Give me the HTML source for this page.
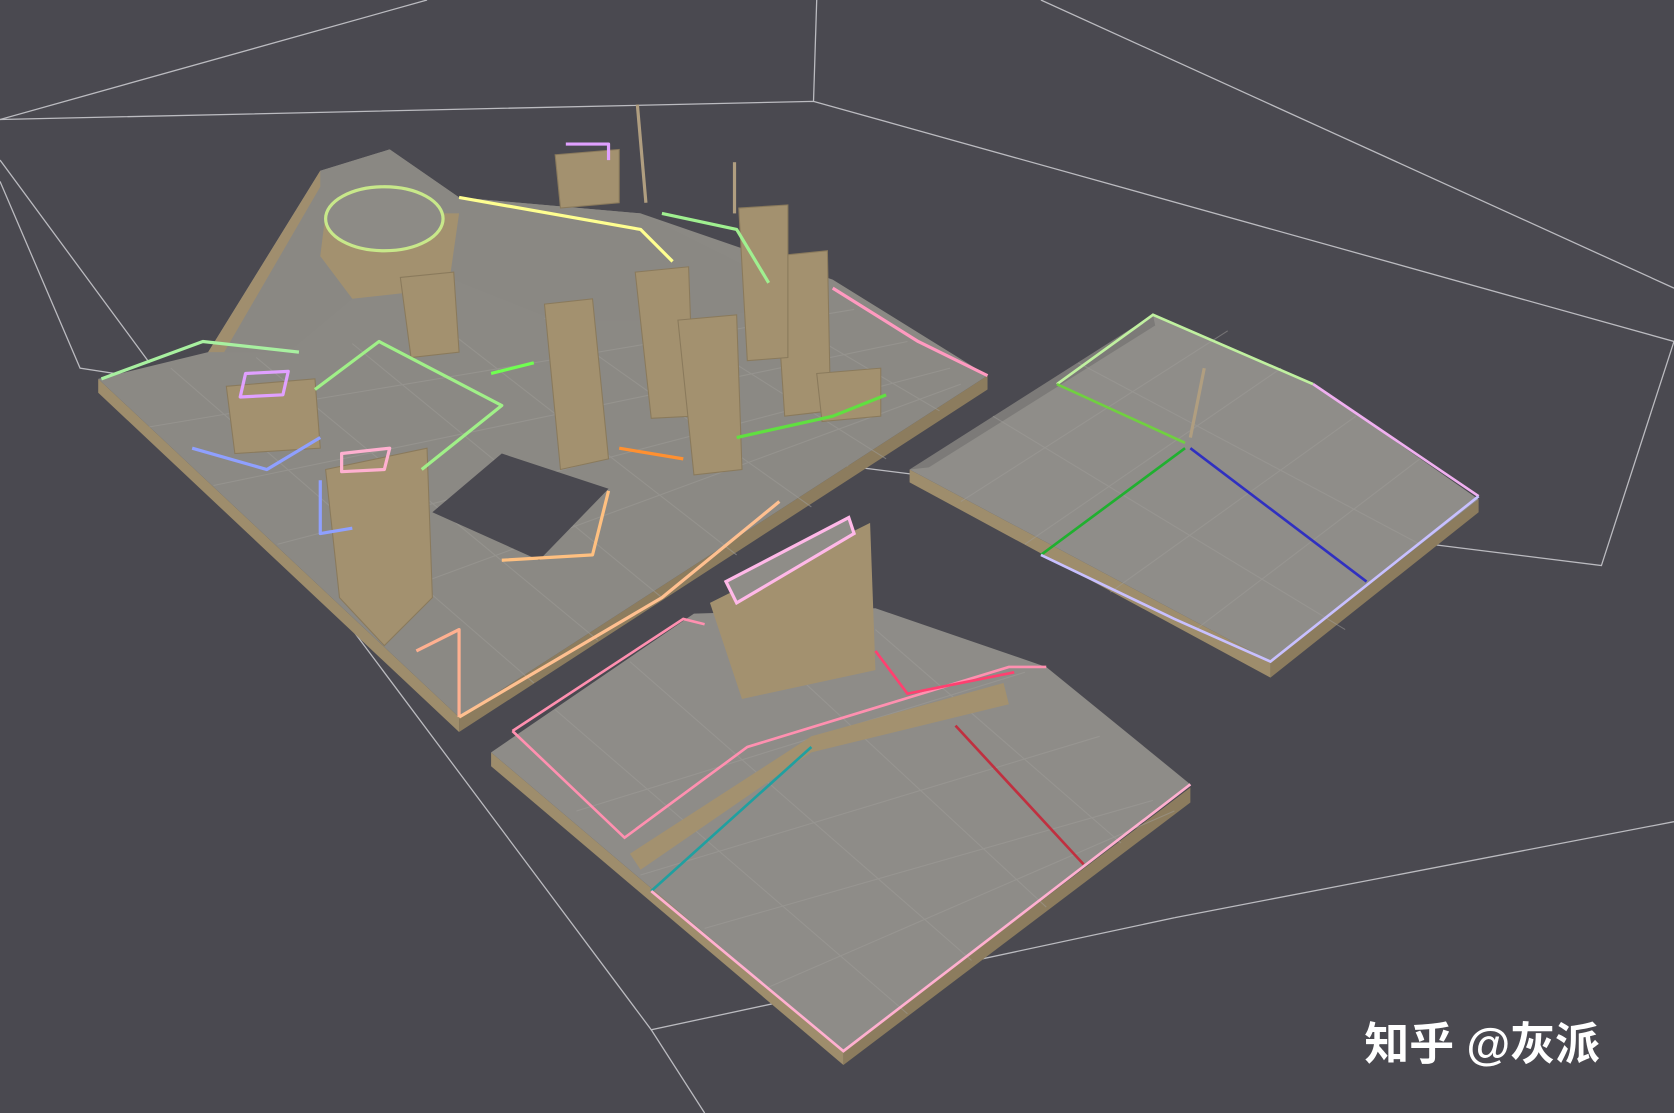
<!DOCTYPE html>
<html><head><meta charset="utf-8">
<style>
html,body{margin:0;padding:0;background:#4a4950;overflow:hidden}
svg{display:block}
.wm{font-family:"Liberation Sans","Noto Sans CJK SC",sans-serif;font-weight:bold;fill:#fff}
</style></head><body>
<svg width="1674" height="1113" viewBox="0 0 1568 1043" preserveAspectRatio="none" xmlns="http://www.w3.org/2000/svg">
<rect width="1568" height="1043" fill="#4a4950"/>
<g stroke="#cfcfd4" stroke-width="1.2" fill="none" opacity="0.85">
<path d="M0 112 L400 0"/>
<path d="M762 95 L765 0"/>
<path d="M0 112 L762 95 L1568 320"/>
<path d="M975 0 L1568 270"/>
<path d="M1568 320 L1500 530 L1340 510"/>
<path d="M0 150 L140 340"/>
<path d="M330 590 L610 965 L1100 860"/>
<path d="M0 170 L75 345 L140 355"/>
<path d="M610 965 L660 1043"/>
<path d="M1100 860 L1568 770"/>
<path d="M780 435 L860 445"/>
</g>
<!-- LEFT PLATE -->
<polygon points="92,355 430,672 430,686 92,368" fill="#9e8d6c"/>
<polygon points="430,672 925,352 925,365 430,686" fill="#8c7c5e"/>
<polygon points="92,355 195,330 300,160 365,140 430,185 600,200 780,262 925,352 430,672" fill="#8b8984"/>
<g stroke="#9c9a95" stroke-width="1" opacity="0.6">
<path d="M160 345 L500 640 M240 335 L560 600 M330 322 L620 560 M420 310 L690 520 M510 298 L760 475 M600 285 L830 430 M690 273 L880 385"/>
<path d="M140 400 L800 290 M200 455 L850 320 M260 510 L890 345 M330 570 L900 360"/>
</g>
<polygon points="405,480 470,425 570,458 505,525" fill="#4a4950"/>
<polygon points="195,330 300,160 365,140 430,185 600,200 700,250 720,290 640,300 520,300 420,260 330,280 270,330" fill="#8a8883"/>
<polygon points="195,330 300,160 300,175 210,330" fill="#a08e6e"/>
<polygon points="305,200 430,200 420,270 330,280 300,240" fill="#a3916f"/>
<ellipse cx="360" cy="205" rx="55" ry="30" fill="#8d8b86" stroke="#c8e88a" stroke-width="3"/>
<g fill="#a3916f" stroke="#8a7a5c" stroke-width="1">
<polygon points="375,260 425,255 430,330 385,335"/>
<polygon points="510,285 555,280 570,430 525,440"/>
<polygon points="595,255 645,250 650,390 610,392"/>
<polygon points="635,300 690,295 695,440 650,445"/>
<polygon points="725,240 775,235 778,385 735,390"/>
<polygon points="692,195 738,192 738,335 700,338"/>
<polygon points="520,145 580,140 580,190 525,195"/>
<polygon points="212,362 295,355 300,420 220,425"/>
<polygon points="305,440 400,420 405,560 360,605 318,560"/>
<polygon points="765,350 825,345 825,390 770,395"/>
</g>
<g fill="none" stroke-width="3" stroke-linejoin="round">
<path d="M95 355 L190 320 L280 330" stroke="#a8f0a0"/>
<path d="M295 365 L355 320 L470 380 L395 440" stroke="#a0f088"/>
<path d="M180 420 L250 440 L300 410" stroke="#8fa0ff"/>
<path d="M300 450 L300 500 L330 495" stroke="#8fa0ff"/>
<path d="M430 672 L430 590 L390 610" stroke="#ffb090"/>
<path d="M430 672 L620 560 L730 470" stroke="#ffc090"/>
<path d="M570 460 L555 520 L470 525" stroke="#ffc080"/>
<path d="M690 410 L780 390 L830 370" stroke="#60e040"/>
<path d="M780 270 L860 320 L925 352" stroke="#ff9ac0"/>
<path d="M430 185 L600 215 L630 245" stroke="#ffff90"/>
<path d="M530 135 L570 135 L570 150" stroke="#e0a0ff"/>
<path d="M230 350 L270 348 L265 370 L225 372 Z" stroke="#e0a0ff"/>
<path d="M320 425 L365 420 L360 440 L320 442 Z" stroke="#ffb0d0"/>
<path d="M620 200 L690 215 L720 265" stroke="#a0f090"/>
<path d="M460 350 L500 340" stroke="#70ff50"/>
<path d="M580 420 L640 430" stroke="#ff9030"/>
</g>
<line x1="597" y1="98" x2="605" y2="190" stroke="#b09e80" stroke-width="3"/>
<line x1="688" y1="152" x2="688" y2="200" stroke="#b09e80" stroke-width="3"/>
<!-- RIGHT PLATE -->
<polygon points="852,440 1190,620 1190,635 852,452" fill="#9e8d6c"/>
<polygon points="1190,620 1385,468 1385,480 1190,635" fill="#8c7c5e"/>
<polygon points="852,440 1080,295 1230,360 1385,468 1190,620" fill="#8f8d89"/>
<polygon points="852,440 1080,295 1082,305 870,438" fill="#5a5958" opacity="0.35"/>
<g stroke="#a09e9a" stroke-width="1" opacity="0.5">
<path d="M930 390 L1260 590 M1010 340 L1330 510 M900 470 L1150 310 M960 510 L1200 345 M1040 555 L1270 390 M1120 590 L1330 430"/>
</g>
<g fill="none" stroke-width="2.5">
<path d="M990 360 L1080 295 L1230 360" stroke="#c0f0a0"/>
<path d="M1230 360 L1385 465" stroke="#f0b0f0"/>
<path d="M990 360 L1110 415" stroke="#70d040"/>
<path d="M975 520 L1110 420" stroke="#20b030"/>
<path d="M1115 420 L1280 545" stroke="#3030c0"/>
<path d="M975 520 L1100 580 L1190 620 L1385 465" stroke="#c8c0ff"/>
</g>
<line x1="1128" y1="345" x2="1115" y2="410" stroke="#b09e80" stroke-width="3"/>
<!-- BOTTOM PLATE -->
<polygon points="460,705 790,985 790,998 460,718" fill="#9e8d6c"/>
<polygon points="790,985 1115,738 1115,752 790,998" fill="#8c7c5e"/>
<polygon points="460,705 650,575 820,570 980,625 1115,735 790,985" fill="#8e8c88"/>
<g stroke="#a09e9a" stroke-width="1" opacity="0.5">
<path d="M520 665 L850 950 M590 620 L910 900 M700 590 L980 850 M820 590 L1050 790"/>
<path d="M540 760 L960 630 M600 820 L1030 690 M660 870 L1080 750 M720 925 L1100 760"/>
</g>
<polygon points="665,565 815,490 820,628 695,655" fill="#a3916f"/>
<polygon points="680,545 795,485 800,500 690,565" fill="#8f8d88" stroke="#ffb8e8" stroke-width="3"/>
<polygon points="590,800 760,690 940,640 945,660 760,705 600,815" fill="#a3916f"/>
<g fill="none" stroke-width="2.5">
<path d="M480 685 L640 580 L660 585" stroke="#ff90b0"/>
<path d="M480 685 L585 785 L700 700 L945 625 L980 625" stroke="#ff90b0"/>
<path d="M820 610 L850 650 L950 630" stroke="#ff4070"/>
<path d="M610 835 L760 700" stroke="#20a0a0"/>
<path d="M895 680 L1015 810" stroke="#c03040"/>
<path d="M610 835 L700 910 L790 985 L1115 735" stroke="#ffb0d0"/>
</g>
<text class="wm" x="1278" y="993" font-size="42">知乎 @灰派</text>
</svg>
</body></html>
